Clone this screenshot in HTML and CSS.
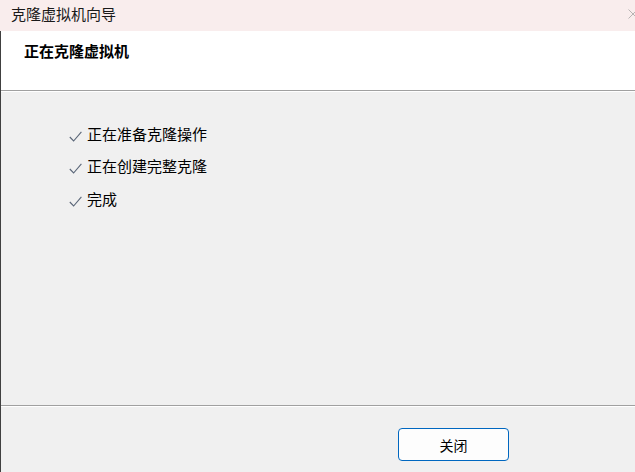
FILE: index.html
```html
<!DOCTYPE html>
<html>
<head>
<meta charset="utf-8">
<link rel="stylesheet" href="styles.css">
</head>
<body>
<div class="window">
  <div class="titlebar">
    <span class="title">克隆虚拟机向导</span>
    <svg class="close" width="10" height="10" viewBox="0 0 10 10"><path d="M0.5 0.5 L9.5 9.5 M9.5 0.5 L0.5 9.5" stroke="#b8b4b4" stroke-width="1" fill="none"/></svg>
  </div>
  <div class="frame">
    <div class="header"><span class="heading">正在克隆虚拟机</span></div>
    <div class="body">
      <ul class="steps">
        <li><svg class="check" width="13" height="11" viewBox="0 0 13 11"><path d="M0.8 6 L4.6 10 L12.4 0.8" stroke="#5a6678" stroke-width="1.1" fill="none"/></svg><span>正在准备克隆操作</span></li>
        <li><svg class="check" width="13" height="11" viewBox="0 0 13 11"><path d="M0.8 6 L4.6 10 L12.4 0.8" stroke="#5a6678" stroke-width="1.1" fill="none"/></svg><span>正在创建完整克隆</span></li>
        <li><svg class="check" width="13" height="11" viewBox="0 0 13 11"><path d="M0.8 6 L4.6 10 L12.4 0.8" stroke="#5a6678" stroke-width="1.1" fill="none"/></svg><span>完成</span></li>
      </ul>
    </div>
    <div class="footer">
      <button class="btn">关闭</button>
    </div>
  </div>
</div>
</body>
</html>
```
FILE: styles.css
```css
html, body {
  margin: 0;
  padding: 0;
}
body {
  width: 635px;
  height: 472px;
  overflow: hidden;
  font-family: "Noto Sans CJK SC", "Microsoft YaHei", sans-serif;
  background: #f0f0f0;
}
.window {
  display: flex;
  flex-direction: column;
  height: 472px;
}
.titlebar {
  height: 31px;
  background: #f9eded;
  display: flex;
  align-items: center;
  justify-content: space-between;
  padding: 0 0 0 11px;
  box-sizing: border-box;
  flex: none;
}
.title {
  font-size: 15px;
  color: #1a1a1a;
  margin-top: -4px;
}
.close {
  margin-right: -3px;
  margin-top: -4px;
}
.frame {
  flex: 1;
  display: flex;
  flex-direction: column;
  border-left: 1px solid #404040;
}
.header {
  height: 60px;
  background: #ffffff;
  border-bottom: 1px solid #a0a0a0;
  box-shadow: 0 1px 0 #ffffff;
  padding: 7px 0 0 23px;
  box-sizing: border-box;
  flex: none;
}
.heading {
  font-size: 15px;
  font-weight: bold;
  color: #000;
}
.body {
  height: 314px;
  margin-top: 1px;
  border-bottom: 1px solid #a0a0a0;
  box-sizing: border-box;
  flex: none;
  padding-top: 30px;
  padding-left: 68px;
}
.steps {
  list-style: none;
  margin: 0;
  padding: 0;
  display: flex;
  flex-direction: column;
  gap: 10.5px;
}
.steps li {
  display: flex;
  align-items: center;
  height: 22px;
  font-size: 15px;
  color: #000;
}
.check {
  margin-right: 5px;
  margin-top: 6px;
}
.footer {
  flex: 1;
  border-top: 1px solid #ffffff;
  padding: 21px 0 0 397px;
}
.btn {
  width: 111px;
  height: 33px;
  border: 1px solid #0067c0;
  border-radius: 4px;
  background: #fdfdfd;
  font-family: "Noto Sans CJK SC", sans-serif;
  font-size: 14px;
  color: #000;
  padding: 0;
}
```
